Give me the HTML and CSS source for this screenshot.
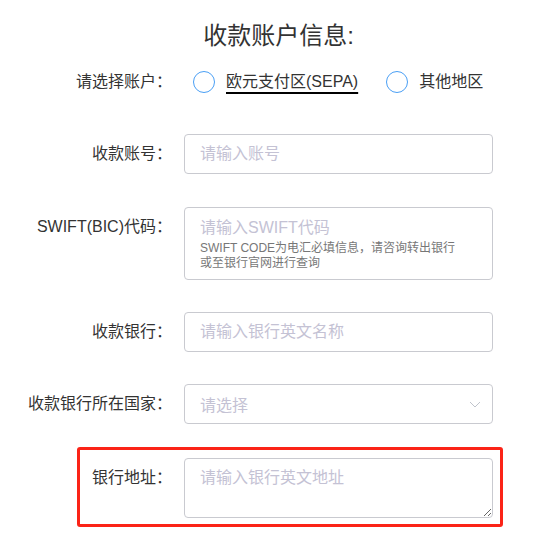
FILE: index.html
```
<!DOCTYPE html>
<html lang="zh-CN">
<head>
<meta charset="utf-8">
<title>收款账户信息</title>
<link rel="stylesheet" href="styles.css">
</head>
<body>
<div class="page">
  <h1 class="title">收款账户信息:</h1>
  <form class="form">
    <div class="form-item radio-item">
      <label class="label">请选择账户：</label>
      <div class="control radios">
        <label class="radio"><span class="radio-dot"></span><span class="radio-text underline">欧元支付区(SEPA)</span></label>
        <label class="radio"><span class="radio-dot"></span><span class="radio-text">其他地区</span></label>
      </div>
    </div>
    <div class="form-item gap33">
      <label class="label">收款账号：</label>
      <div class="control"><input class="input" type="text" placeholder="请输入账号"></div>
    </div>
    <div class="form-item">
      <label class="label">SWIFT(BIC)代码：</label>
      <div class="control">
        <div class="box">
          <input class="box-input" type="text" placeholder="请输入SWIFT代码">
          <p class="help">SWIFT CODE为电汇必填信息，请咨询转出银行<br>或至银行官网进行查询</p>
        </div>
      </div>
    </div>
    <div class="form-item">
      <label class="label">收款银行：</label>
      <div class="control"><input class="input" type="text" placeholder="请输入银行英文名称"></div>
    </div>
    <div class="form-item gap34">
      <label class="label">收款银行所在国家：</label>
      <div class="control">
        <div class="select">
          <span class="select-placeholder">请选择</span>
          <svg class="chevron" width="12" height="7" viewBox="0 0 12 7"><path d="M1 1 L6 6 L11 1" fill="none" stroke="#c0c4cc" stroke-width="1"/></svg>
        </div>
      </div>
    </div>
    <div class="form-item highlight">
      <label class="label">银行地址：</label>
      <div class="control"><textarea class="textarea" placeholder="请输入银行英文地址"></textarea></div>
    </div>
  </form>
</div>
</body>
</html>
```
FILE: styles.css
```
html, body {
  margin: 0;
  padding: 0;
  background: #fff;
}
body {
  font-family: "Liberation Sans", "Noto Sans CJK SC", sans-serif;
  color: #333;
}
.page {
  width: 548px;
  padding-top: 18px;
}
.title {
  margin: 0 0 8px 9px;
  font-size: 24px;
  line-height: 36px;
  font-weight: normal;
  text-align: center;
  color: #333;
}
.form {
  margin: 0;
}
.form-item {
  display: flex;
  align-items: flex-start;
  column-gap: 12px;
  margin-bottom: 32px;
}
.form-item.gap33 { margin-bottom: 33px; }
.form-item.gap34 { margin-bottom: 34px; }
.label {
  width: 172px;
  flex: none;
  text-align: right;
  font-size: 16px;
  line-height: 40px;
  color: #333;
  white-space: nowrap;
}
.control {
  width: 309px;
  flex: none;
}
.input, .select {
  box-sizing: border-box;
  width: 309px;
  height: 40px;
  border: 1px solid #c9cad0;
  border-radius: 4px;
  padding: 0 15px;
  font-family: inherit;
  font-size: 16px;
  color: #333;
  outline: none;
  background: #fff;
}
.input::placeholder,
.box-input::placeholder,
.textarea::placeholder {
  color: #c4c2d4;
  opacity: 1;
}
.radios {
  display: flex;
  align-items: center;
  height: 40px;
  padding-left: 9px;
  box-sizing: border-box;
  column-gap: 28px;
}
.radio {
  display: flex;
  align-items: center;
  column-gap: 11px;
  font-size: 16px;
  color: #333;
}
.radio-dot {
  box-sizing: border-box;
  width: 22px;
  height: 22px;
  border: 1.5px solid #4a9ff5;
  border-radius: 50%;
  background: #fff;
}
.radio-text {
  line-height: 22px;
}
.underline {
  text-decoration: underline;
  text-decoration-color: #000;
  text-decoration-thickness: 1.5px;
  text-underline-offset: 5px;
}
.box {
  box-sizing: border-box;
  width: 309px;
  height: 73px;
  border: 1px solid #c9cad0;
  border-radius: 4px;
  padding: 8px 15px 0;
}
.box-input {
  display: block;
  width: 100%;
  height: 24px;
  border: 0;
  padding: 0;
  margin: 0;
  font-family: inherit;
  font-size: 16px;
  line-height: 24px;
  outline: none;
}
.help {
  margin: 1px 0 0;
  font-size: 12px;
  line-height: 15px;
  color: #777;
}
.select {
  display: flex;
  align-items: center;
  justify-content: space-between;
  padding-right: 11px;
}
.select-placeholder {
  color: #c4c2d4;
}
.chevron {
  display: block;
}
.highlight {
  position: relative;
  margin-top: 0;
}
.highlight::after {
  content: "";
  position: absolute;
  top: -11px;
  left: 77px;
  width: 426px;
  height: 80px;
  box-sizing: border-box;
  border: 3px solid #fb2317;
  border-radius: 3px;
  pointer-events: none;
}
.textarea {
  display: block;
  box-sizing: border-box;
  width: 309px;
  height: 60px;
  border: 1px solid #c9cad0;
  border-radius: 4px;
  padding: 7px 15px;
  font-family: inherit;
  font-size: 16px;
  line-height: 24px;
  outline: none;
  resize: vertical;
}
```
